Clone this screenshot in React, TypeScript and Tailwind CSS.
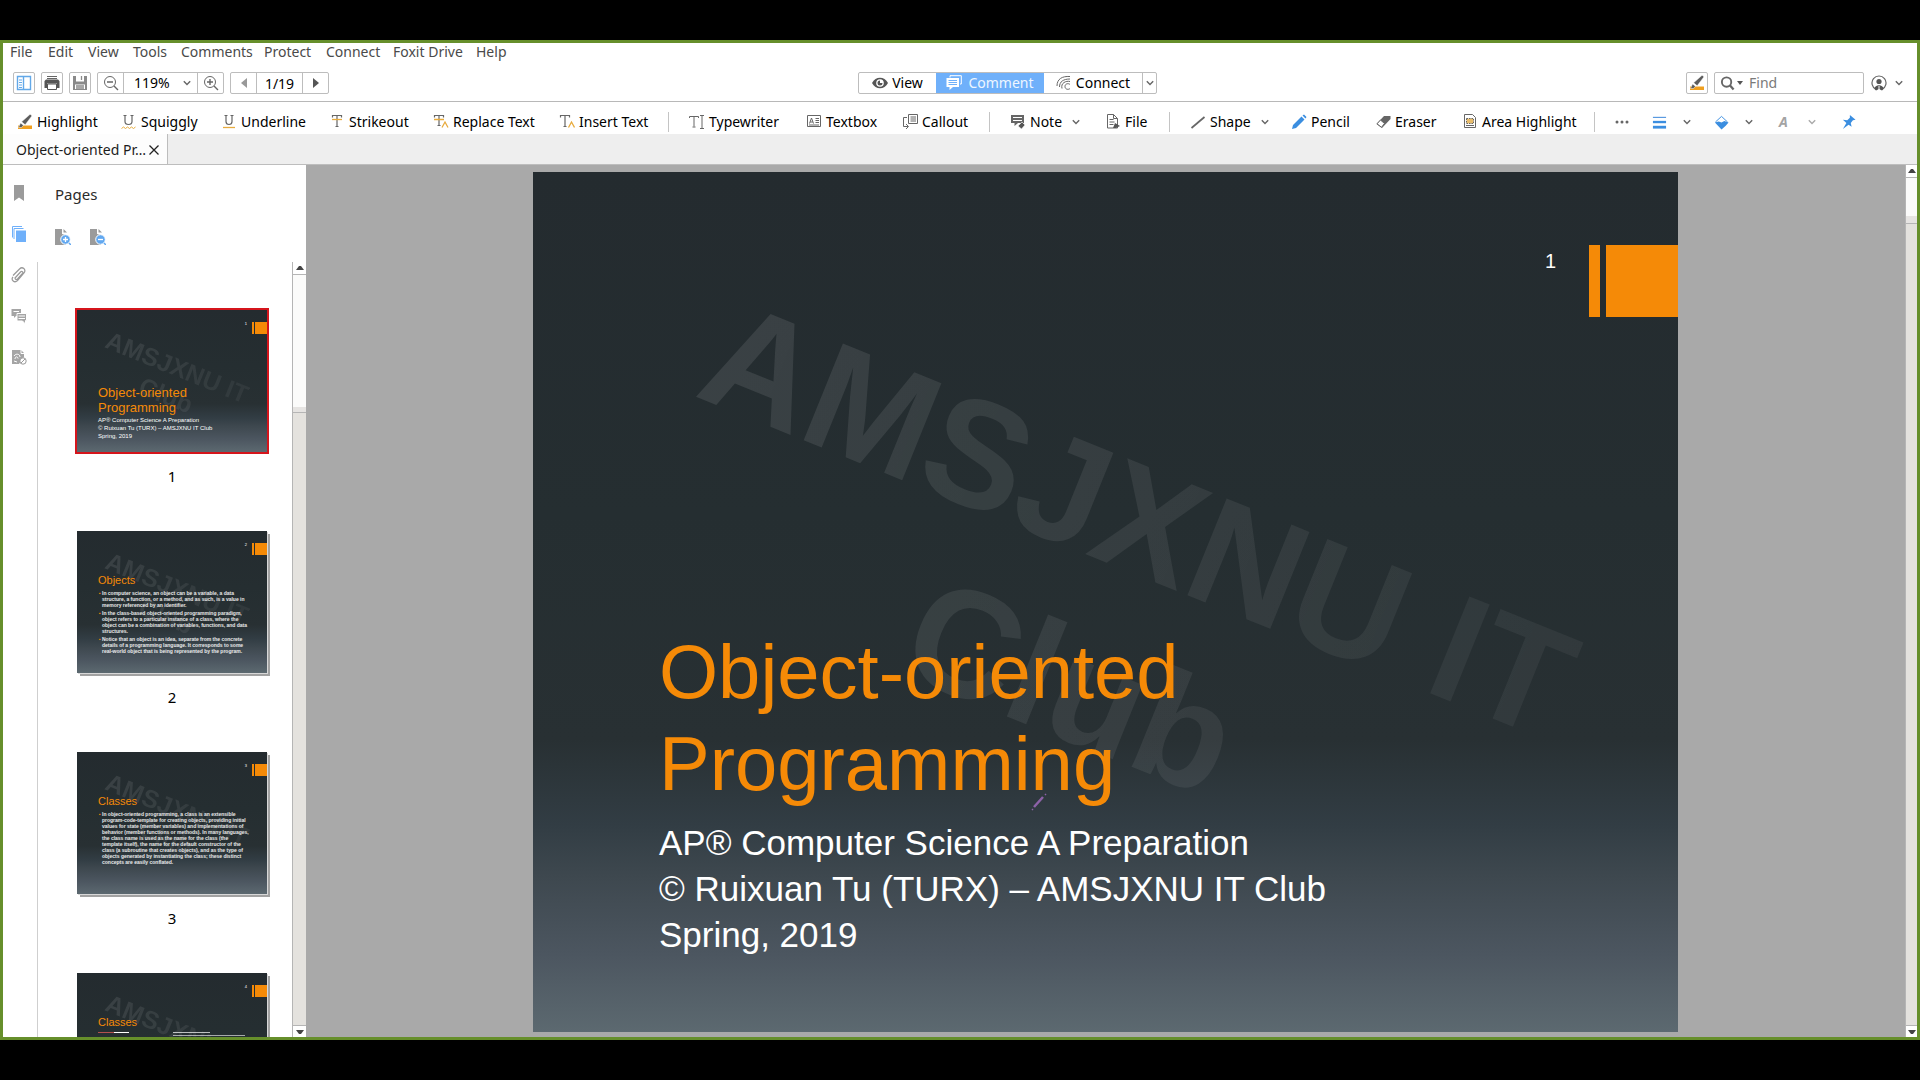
import type { ReactNode } from "react";

const menus = [
    { name: "File", width: "w-[38px]" },
    { name: "Edit", width: "w-[40px]" },
    { name: "View", width: "w-[45px]" },
    { name: "Tools", width: "w-[48px]" },
    { name: "Comments", width: "w-[83px]" },
    { name: "Protect", width: "w-[62px]" },
    { name: "Connect", width: "w-[67px]" },
    { name: "Foxit Drive", width: "w-[83px]" },
    { name: "Help", width: "w-[40px]" },
];

const Svg = ({ children, className = "size-4" }: { children: ReactNode; className?: string }) => (
    <svg viewBox="0 0 16 16" className={`shrink-0 ${className}`} fill="none" stroke="#666" aria-hidden="true">
        {children}
    </svg>
);

const Chevron = ({ light = false }: { light?: boolean }) => (
    <svg viewBox="0 0 8 8" className="size-2 shrink-0" fill="none" stroke={light ? "#aaa" : "#666"} strokeWidth="1.4" aria-hidden="true">
        <path d="M0.8 2.2 L4 5.6 L7.2 2.2" />
    </svg>
);

const Marker = () => (
    <Svg>
        <path d="M1 15v-3.5h14V15z" fill="#f0a020" stroke="none" />
        <path d="M1.5 13.5 3.5 9l3 2.2L4.5 13.5zM4.6 7.8 12.5 0.8c1-.8 2.6.3 2 1.6L8.2 10.8z" fill="#5c5c5c" stroke="#fff" strokeWidth="0.5" />
    </Svg>
);

const icons: Record<string, ReactNode> = {
    highlight: <Marker />,
    squiggly: (
        <Svg>
            <path d="M2.5 1.5h3M9.5 1.5h3M4 1.5v6c0 4 7 4 7 0v-6" strokeWidth="1.2" />
            <path d="M0.5 14.5l2-1.5 2 1.5 2-1.5 2 1.5 2-1.5 2 1.5 2-1.5" stroke="#e8ab3d" />
        </Svg>
    ),
    underline: (
        <Svg>
            <path d="M3.5 1.5h3M9.5 1.5h3M5 1.5v6c0 4 6 4 6 0v-6" strokeWidth="1.2" />
            <path d="M2 13.5h12" stroke="#e8ab3d" strokeWidth="1.3" />
        </Svg>
    ),
    strikeout: (
        <Svg>
            <path d="M3.5 3.5v-2h9v2M8 1.5v11M6.5 12.5h3" strokeWidth="1.2" />
            <path d="M3 5.5h10" stroke="#e8ab3d" strokeWidth="1.3" />
        </Svg>
    ),
    replace: (
        <Svg>
            <path d="M1.5 3.5v-2h9v2M6 1.5v10M4.5 11.5h3" strokeWidth="1.2" />
            <path d="M1 5.5h10M9 13.5l3-5.5 3 5.5" stroke="#e8ab3d" strokeWidth="1.3" />
        </Svg>
    ),
    insert: (
        <Svg>
            <path d="M1.5 3.5v-2h9v2M6 1.5v11M4.5 12.5h3" strokeWidth="1.2" />
            <path d="M9.5 13.5l3-5.5 3 5.5" stroke="#e8ab3d" strokeWidth="1.3" />
        </Svg>
    ),
    typewriter: (
        <Svg>
            <path d="M0.5 4V2.5h9V4M5 2.5v10M3.5 13h3M11 1.5h4M13 1.5v13M11 14.5h4" />
        </Svg>
    ),
    textbox: (
        <Svg>
            <path d="M1.5 1.5h13v11h-13zM3.5 9.5 5.5 4l2 5.5M4.2 8h2.6M9.5 4.5H13M9.5 6.5H13M9.5 8.5H13M3 11h10" />
        </Svg>
    ),
    callout: (
        <Svg>
            <path d="M6.5 0.5h9v9h-9zM8.5 3H14M8.5 5H14M8.5 7H14M5 3.5H1.5v9H6M4 10l2.5 2.5L4 15" />
        </Svg>
    ),
    note: (
        <Svg>
            <path d="M1 1h13v8H8l-3.5 3V9H1z" fill="#666" stroke="none" />
            <path d="M3 3.5h9M3 6.5h9" stroke="#fff" />
            <path d="M8 12l4-4 3 3-3.5 4z" fill="#555" stroke="#fff" strokeWidth="0.6" />
        </Svg>
    ),
    file: (
        <Svg>
            <path d="M2.5 0.5h6l4 4V14h-10zM8.5 0.5v4h4M4.5 5.5h4M4.5 8h5M4.5 10.5h4" />
            <path d="M8 14l2-5 5 3-4 2z" fill="#555" stroke="none" />
        </Svg>
    ),
    shape: (
        <Svg>
            <path d="M1.5 14 14.5 3" strokeWidth="1.7" />
        </Svg>
    ),
    pencil: (
        <Svg>
            <path d="M1 15l1-4 8.5-8.5 3 3L5 14zM11.5 1.5 13 0.5l2.5 2.5-1 1.5z" fill="#3b8ee0" stroke="none" />
        </Svg>
    ),
    eraser: (
        <Svg>
            <path d="M1.5 10 9 2h6.5v3L7 14z" fill="#666" stroke="none" />
            <path d="M2 9.8 5.5 6l4 3.5-3 3.8z" fill="#fff" />
        </Svg>
    ),
    area: (
        <Svg>
            <path d="M2.500 0.500h8l3 3v10h-11zM4 11.500h8" />
            <path d="M4.500 4.500h7v5h-7z" fill="#e9bd6c" strokeDasharray="1.5 1" />
        </Svg>
    ),
};

type Tool = { id: string; label: string; width: string; menu?: boolean };

const toolGroups: Tool[][] = [
    [
        { id: "highlight", label: "Highlight", width: "w-[104px]" },
        { id: "squiggly", label: "Squiggly", width: "w-[100px]" },
        { id: "underline", label: "Underline", width: "w-[108px]" },
        { id: "strikeout", label: "Strikeout", width: "w-[104px]" },
        { id: "replace", label: "Replace Text", width: "w-[126px]" },
        { id: "insert", label: "Insert Text", width: "w-[109px]" },
    ],
    [
        { id: "typewriter", label: "Typewriter", width: "w-[117px]" },
        { id: "textbox", label: "Textbox", width: "w-[96px]" },
        { id: "callout", label: "Callout", width: "w-[87px]" },
    ],
    [
        { id: "note", label: "Note", width: "w-[95px]", menu: true },
        { id: "file", label: "File", width: "w-[64px]" },
    ],
    [
        { id: "shape", label: "Shape", width: "w-[101px]", menu: true },
        { id: "pencil", label: "Pencil", width: "w-[84px]" },
        { id: "eraser", label: "Eraser", width: "w-[87px]" },
        { id: "area", label: "Area Highlight", width: "w-[132px]" },
    ],
];

function MenuBar() {
    return (
        <nav className="flex h-[18px] items-center pl-[7px] text-[#4a4a4a]">
            {menus.map((menu) => (
                <button key={menu.name} className={`text-left whitespace-nowrap ${menu.width}`}>
                    {menu.name}
                </button>
            ))}
        </nav>
    );
}

function MainToolbar() {
    const box = "flex h-[22px] items-center justify-center border border-[#bdbdbd]";
    return (
        <div className="flex h-[41px] items-center justify-between border-b border-[#b8b8b8] pt-1 pr-[14px] pl-[10px]">
            <div className="flex gap-1.5">
                <button aria-label="Navigation panel" className={`${box} w-[22px] rounded-xs`}>
                    <Svg>
                        <path d="M1.5 1.5h13v13h-13zM7.5 2v13" stroke="#62a8e8" strokeWidth="1.4" />
                        <path d="M3 5h3M3 7.5h3M3 10h3M3 12.5h3" stroke="#62a8e8" />
                    </Svg>
                </button>
                <button aria-label="Print" className={`${box} w-[22px] rounded-xs`}>
                    <Svg>
                        <path d="M3 1.5h10M3 3.5h10" strokeWidth="1.2" />
                        <path d="M2 4.5h12L15.5 6v7H13V8.5H3V13H0.5V6z" fill="#555" stroke="none" />
                        <path d="M3.5 9h9v5.5h-9z" fill="#fff" stroke="#555" />
                    </Svg>
                </button>
                <button aria-label="Save" className={`${box} w-[22px] rounded-xs`}>
                    <Svg>
                        <path d="M1 1h14v14H1z" fill="#8a8a8a" stroke="none" />
                        <path d="M4 1h8v5.5H4zM3 9.500h10V14H3z" fill="#fff" stroke="none" />
                        <path d="M9.5 1v4M4 11h8M4 13h8" stroke="#8a8a8a" strokeWidth="1.3" />
                    </Svg>
                </button>
                <div className={`${box} rounded-xs`}>
                    <button aria-label="Zoom out" className="flex w-[25px] justify-center">
                        <Svg>
                            <path d="M11 11l4 4M4 7h6" strokeWidth="1.4" />
                            <circle cx="7" cy="7" r="5.5" />
                        </Svg>
                    </button>
                    <div className="relative h-full w-[75px] border-x border-[#bdbdbd]">
                        <select aria-label="Zoom level" className="h-full w-full appearance-none pl-[10px] leading-5 text-black">
                            <option>119%</option>
                        </select>
                        <span className="pointer-events-none absolute top-1.5 right-1.5">
                            <Chevron />
                        </span>
                    </div>
                    <button aria-label="Zoom in" className="flex w-[25px] justify-center">
                        <Svg>
                            <path d="M11 11l4 4M4 7h6M7 4v6" strokeWidth="1.4" />
                            <circle cx="7" cy="7" r="5.5" />
                        </Svg>
                    </button>
                </div>
                <div className={`${box} rounded-xs`}>
                    <button aria-label="Previous page" className="flex w-[25px] justify-center">
                        <svg viewBox="0 0 6 10" className="h-2.5 w-1.5" fill="#999">
                            <path d="M6 0v10L0 5z" />
                        </svg>
                    </button>
                    <input aria-label="Page" defaultValue="1/19" className="h-full w-[47px] border-x border-[#bdbdbd] text-center text-black" />
                    <button aria-label="Next page" className="flex w-[25px] justify-center">
                        <svg viewBox="0 0 6 10" className="h-2.5 w-1.5" fill="#555">
                            <path d="M0 0v10l6-5z" />
                        </svg>
                    </button>
                </div>
            </div>

            <div className={`${box} rounded-xs text-black`}>
                <button className="flex h-full w-[77px] items-center justify-center gap-1">
                    <Svg>
                        <path d="M0 8c3.5-7 12.5-7 16 0-3.5 7-12.5 7-16 0z" fill="#555" stroke="none" />
                        <circle cx="8" cy="8" r="3.8" fill="#fff" stroke="none" />
                        <path d="M8 5.5A2.5 2.5 0 1 0 10.5 8H8z" fill="#555" stroke="none" />
                    </Svg>
                    View
                </button>
                <button className="flex h-full w-[108px] items-center justify-center gap-1.5 bg-[#6fb0fa] text-[#eef6ff]">
                    <Svg>
                        <path d="M4 2.5V0.7h11.3V9H14" stroke="#fff" />
                        <path d="M0.5 3H13v9H7l-3.5 3v-3h-3z" fill="#fff" stroke="none" />
                        <path d="M2.5 5.500H11M2.500 7.500H11M2.500 9.500H11" stroke="#6fb0fa" />
                    </Svg>
                    Comment
                </button>
                <button className="flex h-full w-[98px] items-center justify-center gap-1">
                    <Svg>
                        <path d="M1 11C1 4 6 1 14 1.5M3.5 12C3.5 6.5 7.5 4 14 4M6 13.5C4.5 8 10 5.5 14 6.5M14 9.5c-1.5-1.5-5-1-5 2s3.5 3.5 5 2" />
                    </Svg>
                    Connect
                </button>
                <button aria-label="More" className="flex h-full w-[14px] items-center justify-center border-l border-[#bdbdbd]">
                    <Chevron />
                </button>
            </div>

            <div className="flex items-center">
                <button aria-label="Highlight fields" className={`${box} mr-1.5 w-[22px] rounded-xs`}>
                    <Marker />
                </button>
                <label className={`${box} w-[150px] rounded-xs pl-[5px]`}>
                    <Svg className="h-4 w-[15px]">
                        <circle cx="7" cy="7" r="5" strokeWidth="2" />
                        <path d="M10.5 10.5l4 4.5" strokeWidth="2.4" />
                    </Svg>
                    <svg viewBox="0 0 6 4" className="mr-1.5 ml-[2px] h-1 w-1.5 shrink-0" fill="#555">
                        <path d="M0 0h6L3 4z" />
                    </svg>
                    <input aria-label="Find" placeholder="Find" className="w-full min-w-0 placeholder:text-[#7a7a7a]" />
                </label>
                <button aria-label="Account" className="ml-[7px] flex items-center gap-2">
                    <Svg>
                        <path d="M5 14.3A7 7 0 1 1 11 14.3" strokeWidth="1.2" />
                        <circle cx="8" cy="6.5" r="2.6" fill="#555" stroke="none" />
                        <path d="M3.5 14c0-5 9-5 9 0L11 15.5 8 14l-3 1.5z" fill="#555" stroke="none" />
                        <path d="M8 11v4" stroke="#fff" />
                    </Svg>
                    <Chevron />
                </button>
            </div>
        </div>
    );
}

function CommentTools() {
    return (
        <div className="flex h-8 items-center overflow-hidden pt-2 pl-[14px] text-black">
            {toolGroups.map((group, i) => (
                <div key={i} className="flex items-center">
                    {group.map((tool) => (
                        <button key={tool.id} className={`flex shrink-0 items-center gap-1 whitespace-nowrap ${tool.width}`}>
                            {icons[tool.id]}
                            {tool.label}
                            {tool.menu && (
                                <span className="ml-1.5">
                                    <Chevron />
                                </span>
                            )}
                        </button>
                    ))}
                    <span className="mr-5 h-5 w-px bg-[#c4c4c4]" />
                </div>
            ))}
            <div className="flex items-center">
                <button aria-label="More tools" className="flex w-[37px]">
                    <svg viewBox="0 0 14 4" className="h-1 w-3.5" fill="#666">
                        <circle cx="2" cy="2" r="1.5" />
                        <circle cx="7" cy="2" r="1.5" />
                        <circle cx="12" cy="2" r="1.5" />
                    </svg>
                </button>
                <button aria-label="Line width" className="flex w-[62px] items-center gap-4">
                    <Svg className="size-[15px]">
                        <path d="M1 2.5h14" stroke="#2f80d8" />
                        <path d="M1 7.5h14" stroke="#3b8ee0" strokeWidth="2.5" />
                        <path d="M1 13h14" stroke="#3b8ee0" strokeWidth="3" />
                    </Svg>
                    <Chevron />
                </button>
                <button aria-label="Fill color" className="flex w-[65px] items-center gap-4">
                    <Svg className="size-[15px]">
                        <path d="M1.5 7.5 8 1.5l6.500 6" stroke="#3b8ee0" />
                        <path d="M1 8l4-1 3 1 3-1.500L15.500 8l-3 3.500L8 15.500z" fill="#3b8ee0" stroke="none" />
                    </Svg>
                    <Chevron />
                </button>
                <button aria-label="Font color" className="flex w-[63px] items-center gap-5 font-bold text-[#a3a3a3] italic">
                    A
                    <Chevron light />
                </button>
                <button aria-label="Pin toolbar">
                    <Svg className="size-[14px]">
                        <path d="M9 0l6.500 5.500-3 .5L10 9l1 4.500L7.500 11 1 16l4-7L1 5.500 6 6l3-3z" fill="#3b8ee0" stroke="none" />
                    </Svg>
                </button>
            </div>
        </div>
    );
}

function ScrollBar({ thumb, grip, className }: { thumb: string; grip: string; className: string }) {
    return (
        <div className={`flex shrink-0 flex-col border-l border-[#b5b5b5] bg-[#e4e2de] ${className}`}>
            <button aria-label="Scroll up" className="flex h-[13px] shrink-0 items-center justify-center border-b border-[#b5b5b5] bg-white">
                <svg viewBox="0 0 8 4" className="h-1 w-2" fill="#444">
                    <path d="M0 4 3 0h2l3 4z" />
                </svg>
            </button>
            <div className={`flex shrink-0 flex-col justify-end border-b border-[#b5b5b5] bg-[#fbfbfa] ${thumb}`}>
                <div className={`bg-[#e6e4e2] ${grip}`} />
            </div>
            <div className="flex-1" />
            <button aria-label="Scroll down" className="flex h-[12px] shrink-0 items-center justify-center border-t border-[#b5b5b5] bg-white">
                <svg viewBox="0 0 8 4" className="h-1 w-2" fill="#444">
                    <path d="M0 0 3 4h2l3-4z" />
                </svg>
            </button>
        </div>
    );
}

const slideFill = "bg-[linear-gradient(#242b2f_0%,#252e31_40%,#283033_66%,#323d44_76%,#3e484f_82%,#4c5660_91%,#5c6970_100%)]";

const slides = [
    { title: "Objects", points: [
        ["In computer science, an object can be a variable, a data", "structure, a function, or a method, and as such, is a value in", "memory referenced by an identifier."],
        ["In the class-based object-oriented programming paradigm,", "object refers to a particular instance of a class, where the", "object can be a combination of variables, functions, and data", "structures."],
        ["Notice that an object is an idea, separate from the concrete", "details of a programming language. It corresponds to some", "real-world object that is being represented by the program."],
    ] },
    { title: "Classes", points: [
        ["In object-oriented programming, a class is an extensible", "program-code-template for creating objects, providing initial", "values for state (member variables) and implementations of", "behavior (member functions or methods). In many languages,", "the class name is used as the name for the class (the", "template itself), the name for the default constructor of the", "class (a subroutine that creates objects), and as the type of", "objects generated by instantiating the class; these distinct", "concepts are easily conflated."],
    ] },
    { title: "Classes", points: [] },
];

function Watermark({ size }: { size: string }) {
    return (
        <div className="absolute inset-0 flex items-center justify-center">
            <p className={`rotate-[22deg] bg-linear-to-r from-white/10 to-white/5 bg-clip-text text-center font-bold whitespace-nowrap text-transparent ${size}`}>
                AMSJXNU IT<br />Club
            </p>
        </div>
    );
}

function Thumb({ page, children }: { page: number; children: ReactNode }) {
    const frame = page === 1
        ? "outline-2 outline-[#d5151c]"
        : "shadow-[1px_1px_0_#d8d8d8,3px_3px_0_#a2a2a2]";
    return (
        <figure className="flex h-[221px] shrink-0 flex-col items-center">
            <div className={`relative h-[142px] w-[190px] overflow-hidden font-['Liberation_Sans',sans-serif] ${slideFill} ${frame}`}>
                <Watermark size="text-[25px] leading-[30px]" />
                <div className="absolute top-3 right-0 flex gap-px">
                    <span className="mr-1 text-[4px] leading-[4px] text-white">{page}</span>
                    <span className="h-3 w-[2px] bg-[#f58a07]" />
                    <span className="h-3 w-3 bg-[#f58a07]" />
                </div>
                <div className="relative">{children}</div>
            </div>
            <figcaption className="mt-3 text-[15px] leading-6 text-black">{page}</figcaption>
        </figure>
    );
}

function PagesPanel() {
    return (
        <aside className="flex w-[303px] shrink-0 bg-white">
            <div className="flex w-8 flex-col items-center gap-[25px] pt-5">
                <button aria-label="Bookmarks">
                    <Svg>
                        <path d="M3 0h10v16l-5-3.5L3 16z" fill="#9b9b9b" stroke="none" />
                    </Svg>
                </button>
                <button aria-label="Pages">
                    <Svg>
                        <path d="M1.5 11.5V0.5H11M3 13V2.5h9.5" stroke="#6fb0fa" />
                        <path d="M5 4.5h10V16H5z" fill="#6fb0fa" stroke="none" />
                    </Svg>
                </button>
                <button aria-label="Attachments">
                    <Svg>
                        <path d="M2 8.5 8.5 2c3-3 7 .5 4.500 4L6.500 13.500C3.500 16.500-.5 13 2 9.800M4 11 9.500 5c1.500-1.500 3 0 2 1.300L6.500 12c-1 1-2.500.3-2.500-1z" stroke="#999" strokeWidth="1.2" />
                    </Svg>
                </button>
                <button aria-label="Comments">
                    <Svg>
                        <path d="M0.500 1H10v7H5l-2 2V8H0.500z" fill="#a5a5a5" stroke="none" />
                        <path d="M6 5.500h9.500v7h-1V16l-3-3H6z" fill="#a5a5a5" stroke="#fff" />
                        <path d="M2.500 3.500H8M7.500 8H14M7.500 10.500H14" stroke="#fff" />
                    </Svg>
                </button>
                <button aria-label="Signatures">
                    <Svg>
                        <path d="M1 1h9l3 3v4l-5 7H1z" fill="#a5a5a5" stroke="none" />
                        <path d="M10 1v3.5h3M3 7c2-3 6-2 6 1M4 10c0-3 3-2.5 3-.5M3 12l3 1" stroke="#fff" />
                        <circle cx="12" cy="12" r="3.2" fill="#fff" stroke="#999" />
                        <path d="M10 14l4-4" stroke="#999" />
                    </Svg>
                </button>
            </div>
            <div className="ml-[2px] flex min-w-0 flex-1 flex-col">
                <div className="h-[97px] pt-[17px] pl-[18px]">
                    <h2 className="text-[15px] leading-6 text-[#2b2b2b]">Pages</h2>
                    <div className="mt-[23px] flex gap-[19px]">
                        {["M8 10.5h5M10.5 8v5", "M8 10.5h5"].map((d, i) => (
                            <button key={d} aria-label={i === 0 ? "Enlarge thumbnails" : "Reduce thumbnails"}>
                                <Svg>
                                    <path d="M0 0h7v5l4 1v10H0z" fill="#9b9b9b" stroke="none" />
                                    <path d="M8.500 0 12 3.500H8.500z" fill="#9b9b9b" stroke="none" />
                                    <circle cx="10.5" cy="10.5" r="4.8" fill="#62a8f0" stroke="#fff" />
                                    <path d="M14 14l2 2" stroke="#62a8f0" strokeWidth="1.5" />
                                    <path d={d} stroke="#fff" strokeWidth="1.3" />
                                </Svg>
                            </button>
                        ))}
                    </div>
                </div>
                <div className="flex min-h-0 flex-1">
                    <div className="flex min-w-0 flex-1 flex-col overflow-hidden border-l border-[#cfcfcf] pt-12 pl-[14px]">
                        <Thumb page={1}>
                            <div className="pt-[75px] pl-[21px] text-[13px] leading-[15px] text-[#f58a07]">
                                Object-oriented<br />Programming
                            </div>
                            <div className="pt-px pl-[21px] text-[6px] leading-[8px] whitespace-nowrap text-white">
                                AP® Computer Science A Preparation<br />
                                © Ruixuan Tu (TURX) – AMSJXNU IT Club<br />
                                Spring, 2019
                            </div>
                        </Thumb>
                        {slides.map((slide, i) => (
                            <Thumb key={i} page={i + 2}>
                                <h3 className="pt-[43px] pl-[21px] text-[11px] leading-3 text-[#f58a07]">{slide.title}</h3>
                                <ul className="mt-1 flex flex-col gap-[2px] pl-[22px] text-[5px] leading-[6px] font-bold whitespace-nowrap text-white/90">
                                    {slide.points.map((lines, n) => (
                                        <li key={n} className="flex">
                                            <span className="w-[3px] text-[#f58a07]">▪</span>
                                            <p>
                                                {lines.map((line) => (
                                                    <span key={line} className="block">{line}</span>
                                                ))}
                                            </p>
                                        </li>
                                    ))}
                                </ul>
                                {slide.points.length === 0 && (
                                    <div className="flex gap-[44px] pl-[21px]">
                                        <span className="flex h-px w-[31px]">
                                            <span className="w-4 bg-[#b3504f]" />
                                            <span className="flex-1 bg-white" />
                                        </span>
                                        <span className="flex flex-col gap-[2px]">
                                            <span className="h-px w-[37px] bg-white/70" />
                                            <span className="h-px w-[72px] bg-white/60" />
                                        </span>
                                    </div>
                                )}
                            </Thumb>
                        ))}
                    </div>
                    <ScrollBar className="w-[14px]" thumb="h-[138px]" grip="h-[5px]" />
                </div>
            </div>
        </aside>
    );
}

function Slide() {
    return (
        <article className={`relative h-[860px] w-[1145px] shrink-0 overflow-hidden font-['Liberation_Sans',sans-serif] ${slideFill}`}>
            <Watermark size="text-[152px] leading-[180px]" />
            <div className="relative flex justify-end pt-[73px]">
                <span className="mr-[33px] pt-[4px] text-[20px] leading-6 text-white">1</span>
                <span className="mr-1.5 h-[72px] w-[11px] bg-[#f58a07]" />
                <span className="h-[72px] w-[72px] bg-[#f58a07]" />
            </div>
            <div className="relative pt-[309px] pl-[126px]">
                <h1 className="text-[76px] leading-[92px] text-[#f58a07]">
                    Object-oriented<br />Programming
                </h1>
                <p className="pt-[10px] text-[35px] leading-[46px] text-white">
                    AP® Computer Science A Preparation<br />
                    © Ruixuan Tu (TURX) – AMSJXNU IT Club<br />
                    Spring, 2019
                </p>
            </div>
            {/* pencil cursor */}
            <svg viewBox="0 0 16 18" className="absolute top-[621px] left-[498px] h-[18px] w-4" stroke="#8d62a8">
                <path d="M3 14 12 4" strokeWidth="2.5" />
                <path d="M1 17l1-1M14 2l1-1" strokeWidth="1.5" />
            </svg>
        </article>
    );
}

export default function App() {
    return (
        <div className="flex h-screen flex-col bg-black py-10 font-['Noto_Sans',sans-serif] text-[14px] leading-5">
            <div className="flex min-h-0 flex-1 flex-col border-3 border-[#668f2b] bg-white">
                <MenuBar />
                <MainToolbar />
                <CommentTools />
                <div className="flex h-[31px] border-b border-[#bdbdbd] bg-[#eee]">
                    <div className="flex w-[165px] items-center justify-between border-r border-[#bdbdbd] bg-[#fdfdfd] pt-px pr-2 pl-[13px] whitespace-nowrap text-[#1c1c1c]">
                        Object-oriented Pr…
                        <button aria-label="Close tab">
                            <svg viewBox="0 0 10 10" className="size-2.5" stroke="#222" strokeWidth="1.3">
                                <path d="M0.5 0.5l9 9M9.5 0.5l-9 9" />
                            </svg>
                        </button>
                    </div>
                </div>
                <div className="flex min-h-0 flex-1">
                    <PagesPanel />
                    <main className="flex min-w-0 flex-1 items-start justify-center overflow-hidden bg-[#a9a9a9] pt-[7px]">
                        <Slide />
                    </main>
                    <ScrollBar className="w-[12px]" thumb="h-[46px]" grip="h-[7px]" />
                </div>
            </div>
        </div>
    );
}
